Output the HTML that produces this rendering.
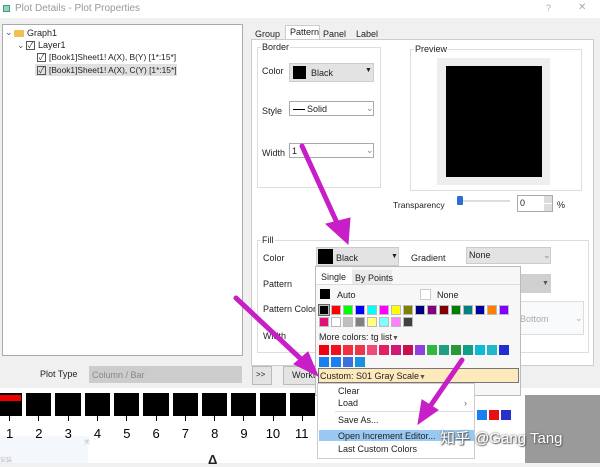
<!DOCTYPE html>
<html><head><meta charset="utf-8"><style>
*{margin:0;padding:0;box-sizing:border-box}
body{width:600px;height:463px;overflow:hidden;background:#f0f0f0;font-family:"Liberation Sans","Noto Sans CJK SC",sans-serif;font-size:9px;color:#222;position:relative}
.a{position:absolute}
.t{position:absolute;white-space:nowrap}
.sq{position:absolute;width:10px;height:10px}
.cb{position:absolute;background:#fff;border:1px solid #aaa}
.ck{position:absolute;width:9px;height:9px;border:1px solid #555;font-size:8px;line-height:7px;text-align:center;color:#333}
</style></head><body>
<div class="a" style="left:0;top:0;width:600px;height:18px;background:#fff"></div>
<div class="a" style="left:3px;top:5px;width:7px;height:7px;border:1px solid #3a6;background:#9cc"></div>
<div class="t" style="left:15px;top:3px;color:#999;font-size:10px">Plot Details - Plot Properties</div>
<div class="t" style="left:546px;top:3px;color:#aaa">?</div>
<div class="t" style="left:578px;top:2px;color:#aaa;font-size:10px">✕</div>
<div class="a" style="left:2px;top:24px;width:241px;height:332px;background:#fff;border:1px solid #aaa"></div>
<div class="t" style="left:5px;top:27px;color:#555">⌄</div>
<div class="a" style="left:14px;top:30px;width:10px;height:7px;background:#f0c050;border-radius:1px"></div>
<div class="t" style="left:27px;top:28px">Graph1</div>
<div class="t" style="left:17px;top:40px;color:#555">⌄</div>
<div class="ck" style="left:26px;top:41px">✓</div>
<div class="t" style="left:38px;top:40px">Layer1</div>
<div class="ck" style="left:37px;top:53px">✓</div>
<div class="t" style="left:49px;top:52px;font-size:8.4px">[Book1]Sheet1! A(X), B(Y) [1*:15*]</div>
<div class="a" style="left:35px;top:64px;width:142px;height:12px;background:#e0e0e0"></div>
<div class="ck" style="left:37px;top:66px">✓</div>
<div class="t" style="left:49px;top:65px;font-size:8.4px">[Book1]Sheet1! A(X), C(Y) [1*:15*]</div>
<div class="t" style="left:255px;top:29px">Group</div>
<div class="a" style="left:285px;top:25px;width:35px;height:15px;background:#fff;border:1px solid #ccc;border-bottom:none"></div>
<div class="t" style="left:290px;top:27px">Pattern</div>
<div class="t" style="left:323px;top:29px">Panel</div>
<div class="t" style="left:356px;top:29px">Label</div>
<div class="a" style="left:251px;top:39px;width:343px;height:327px;background:#fff;border:1px solid #ccc"></div>
<div class="a" style="left:257px;top:47px;width:124px;height:141px;border:1px solid #ddd"></div>
<div class="t" style="left:261px;top:42px;background:#fff;padding:0 1px">Border</div>
<div class="t" style="left:262px;top:66px">Color</div>
<div class="a" style="left:289px;top:63px;width:85px;height:19px;background:#e3e3e3;border:1px solid #ccc"></div>
<div class="a" style="left:293px;top:66px;width:13px;height:13px;background:#000"></div>
<div class="t" style="left:311px;top:68px">Black</div>
<div class="t" style="left:365px;top:67px;font-size:7px">▼</div>
<div class="t" style="left:262px;top:106px">Style</div>
<div class="cb" style="left:289px;top:101px;width:85px;height:15px"></div>
<div class="a" style="left:293px;top:109px;width:12px;height:1px;background:#000"></div>
<div class="t" style="left:307px;top:104px">Solid</div>
<div class="t" style="left:366px;top:103px;color:#888">⌄</div>
<div class="t" style="left:262px;top:148px">Width</div>
<div class="cb" style="left:289px;top:143px;width:85px;height:15px"></div>
<div class="t" style="left:292px;top:146px">1</div>
<div class="t" style="left:366px;top:145px;color:#888">⌄</div>
<div class="a" style="left:410px;top:49px;width:172px;height:142px;border:1px solid #ddd"></div>
<div class="t" style="left:414px;top:44px;background:#fff;padding:0 1px">Preview</div>
<div class="a" style="left:437px;top:58px;width:113px;height:127px;background:#eee"></div>
<div class="a" style="left:446px;top:66px;width:96px;height:111px;background:#000"></div>
<div class="t" style="left:393px;top:200px;font-size:8.5px">Transparency</div>
<div class="a" style="left:460px;top:200px;width:50px;height:2px;background:#ddd"></div>
<div class="a" style="left:457px;top:196px;width:6px;height:9px;background:#2a6fd0;border-radius:1px"></div>
<div class="cb" style="left:517px;top:195px;width:36px;height:17px"></div>
<div class="t" style="left:520px;top:198px">0</div>
<div class="a" style="left:544px;top:196px;width:8px;height:7px;background:#ddd"></div>
<div class="a" style="left:544px;top:204px;width:8px;height:7px;background:#ddd"></div>
<div class="t" style="left:557px;top:200px">%</div>
<div class="a" style="left:257px;top:240px;width:332px;height:113px;border:1px solid #ddd"></div>
<div class="t" style="left:261px;top:235px;background:#fff;padding:0 1px">Fill</div>
<div class="t" style="left:263px;top:253px">Color</div>
<div class="a" style="left:316px;top:247px;width:83px;height:19px;background:#e3e3e3;border:1px solid #ccc"></div>
<div class="a" style="left:318px;top:249px;width:15px;height:15px;background:#000"></div>
<div class="t" style="left:336px;top:253px">Black</div>
<div class="t" style="left:391px;top:253px;font-size:7px">▼</div>
<div class="t" style="left:411px;top:253px">Gradient</div>
<div class="a" style="left:466px;top:247px;width:85px;height:17px;background:#e3e3e3;border:1px solid #ccc"></div>
<div class="t" style="left:469px;top:250px">None</div>
<div class="t" style="left:543px;top:250px;color:#888">⌄</div>
<div class="t" style="left:263px;top:279px">Pattern</div>
<div class="a" style="left:520px;top:274px;width:31px;height:19px;background:#d0d0d0"></div>
<div class="t" style="left:542px;top:280px;font-size:7px;color:#555">▼</div>
<div class="t" style="left:263px;top:304px">Pattern Color</div>
<div class="a" style="left:520px;top:301px;width:64px;height:34px;border:1px solid #ddd;background:#f8fafc"></div>
<div class="t" style="left:520px;top:314px;color:#aaa">Bottom</div>
<div class="t" style="left:575px;top:313px;color:#aaa">⌄</div>
<div class="t" style="left:263px;top:331px">Width</div>
<div class="t" style="left:40px;top:369px">Plot Type</div>
<div class="a" style="left:89px;top:366px;width:153px;height:17px;background:#ccc"></div>
<div class="t" style="left:92px;top:370px;color:#888">Column / Bar</div>
<div class="a" style="left:252px;top:366px;width:20px;height:19px;background:#e3e3e3;border:1px solid #bbb"></div>
<div class="t" style="left:256px;top:370px;font-size:8px">&gt;&gt;</div>
<div class="a" style="left:283px;top:366px;width:40px;height:19px;background:#e3e3e3;border:1px solid #bbb"></div>
<div class="t" style="left:292px;top:370px">Workt</div>
<div class="a" style="left:0;top:388px;width:600px;height:75px;background:#fff"></div>
<div class="a" style="left:525px;top:395px;width:75px;height:68px;background:#9a9a9a"></div>
<div class="a" style="left:0;top:436px;width:88px;height:27px;background:#f4f7fb"></div>
<div class="t" style="left:0;top:455px;font-size:6px;color:#bbb">安装</div>
<div class="t" style="left:84px;top:437px;font-size:6px;color:#bbb">关</div>
<div class="t" style="left:208px;top:452px;font-size:13px;font-weight:bold">Δ</div>
<div class="a" style="left:0;top:393px;width:316px;height:23px;background:#000"></div>
<div class="a" style="left:0;top:395px;width:21px;height:6px;background:#e00"></div>
<div id="bars"></div>
<div id="nums"></div>
<div class="a" style="left:315px;top:266px;width:206px;height:130px;background:#f7f7f7;border:1px solid #bbb"></div>
<div class="a" style="left:316px;top:267px;width:36px;height:17px;background:#fff"></div>
<div class="t" style="left:321px;top:272px">Single</div>
<div class="a" style="left:352px;top:270px;width:40px;height:14px;background:#eaeaea"></div>
<div class="t" style="left:355px;top:273px">By Points</div>
<div class="a" style="left:316px;top:284px;width:204px;height:1px;background:#ddd"></div>
<div class="a" style="left:320px;top:289px;width:10px;height:10px;background:#000"></div>
<div class="t" style="left:337px;top:290px">Auto</div>
<div class="a" style="left:420px;top:289px;width:11px;height:11px;background:#fff;border:1px solid #ccc"></div>
<div class="t" style="left:437px;top:290px">None</div>
<div id="sw"></div>
<div class="t" style="left:319px;top:332px">More colors: tg list<span style="font-size:7px;color:#555">▼</span></div>
<div class="a" style="left:318px;top:368px;width:201px;height:15px;background:#fde9bc;border:1px solid #777"></div>
<div class="t" style="left:320px;top:371px">Custom: S01 Gray Scale<span style="font-size:7px;color:#555">▼</span></div>
<div class="a" style="left:317px;top:383px;width:158px;height:76px;background:#fff;border:1px solid #ccc"></div>
<div class="t" style="left:338px;top:386px">Clear</div>
<div class="t" style="left:338px;top:398px">Load</div>
<div class="t" style="left:464px;top:398px;color:#666">›</div>
<div class="a" style="left:335px;top:411px;width:138px;height:1px;background:#ddd"></div>
<div class="t" style="left:338px;top:415px">Save As...</div>
<div class="a" style="left:319px;top:430px;width:155px;height:11px;background:#99c9f2"></div>
<div class="t" style="left:338px;top:431px">Open Increment Editor...</div>
<div class="t" style="left:338px;top:444px">Last Custom Colors</div>
<div class="sq" style="left:477px;top:410px;background:#1a7ff0"></div>
<div class="sq" style="left:489px;top:410px;background:#e81010"></div>
<div class="sq" style="left:501px;top:410px;background:#2a30c8"></div>
<div class="t" style="left:440px;top:427px;font-size:15px;color:#fff;text-shadow:0 0 2px #555,1px 1px 1px #666">知乎 @Gang Tang</div>
<svg class="a" style="left:0;top:0" width="600" height="463">
<g stroke="#c81ec8" stroke-width="5" stroke-linecap="round" fill="#c81ec8">
<line x1="302" y1="146" x2="338" y2="225"/>
<polygon points="326,224 348,244 350,218" stroke-width="1"/>
<line x1="236" y1="298" x2="302" y2="360"/>
<polygon points="294,364 318,376 308,352" stroke-width="1"/>
<line x1="462" y1="360" x2="431" y2="405"/>
<polygon points="422,400 418,424 438,410" stroke-width="1"/>
</g></svg>
<script>
var s='';
var r1=['#000','#f00','#0f0','#00f','#0ff','#f0f','#ff0','#808000','#000080','#800080','#800000','#008000','#008080','#0000a0','#ff8000','#8000ff'];
var r2=['#e0107a','#fff','#c0c0c0','#808080','#ffff80','#80ffff','#ff80ff','#404040'];
r1.forEach(function(c,i){s+='<div class="sq" style="left:'+(319+i*12)+'px;top:305px;background:'+c+';border:1px solid #bbb"></div>'});
r2.forEach(function(c,i){s+='<div class="sq" style="left:'+(319+i*12)+'px;top:317px;background:'+c+';border:1px solid #bbb"></div>'});
var r3=['#f00010','#f01020','#f03040','#e83848','#f04a78','#e02060','#d01878','#c81050','#9040e0','#30b840','#20a080','#289838','#10a088','#10b8d8','#20b8c8','#2030d0'];
r3.forEach(function(c,i){s+='<div class="sq" style="left:'+(319+i*12)+'px;top:345px;background:'+c+'"></div>'});
['#1a7ff0','#1a80f0','#3a70e0','#1a90e0'].forEach(function(c,i){s+='<div class="sq" style="left:'+(319+i*12)+'px;top:357px;background:'+c+'"></div>'});
s+='<div class="a" style="left:318px;top:304px;width:12px;height:12px;border:1px solid #666"></div>';
document.getElementById('sw').innerHTML=s;
var b='',n='';
for(var i=0;i<11;i++){var cx=9+i*29.3;
b+='<div class="a" style="left:'+(cx+13)+'px;top:393px;width:4px;height:23px;background:#fff"></div>';
b+='<div class="a" style="left:'+cx+'px;top:416px;width:1px;height:5px;background:#000"></div>';
n+='<div class="t" style="left:'+(cx-(i>8?7:3))+'px;top:426px;font-size:13px;color:#000">'+(i+1)+'</div>';}
document.getElementById('bars').innerHTML=b;document.getElementById('nums').innerHTML=n;
</script>
</body></html>
